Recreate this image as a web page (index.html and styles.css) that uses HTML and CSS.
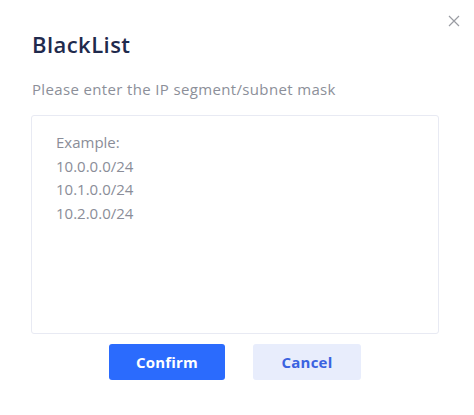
FILE: index.html
```html
<!DOCTYPE html>
<html lang="en">
<head>
<meta charset="utf-8">
<title>BlackList</title>
<link rel="stylesheet" href="styles.css">
</head>
<body>
<div class="dialog">
  <button class="close" aria-label="Close">
    <svg width="12" height="12" viewBox="0 0 12 12"><path d="M1 1L11 11M11 1L1 11" stroke="#9a9ca3" stroke-width="1.2" fill="none"/></svg>
  </button>
  <h1 class="title">BlackList</h1>
  <p class="label">Please enter the IP segment/subnet mask</p>
  <textarea class="input" placeholder="Example:&#10;10.0.0.0/24&#10;10.1.0.0/24&#10;10.2.0.0/24"></textarea>
  <div class="actions">
    <button class="btn btn-primary">Confirm</button>
    <button class="btn btn-secondary">Cancel</button>
  </div>
</div>
</body>
</html>
```
FILE: styles.css
```css
html, body {
  margin: 0;
  padding: 0;
  background: #ffffff;
}
body {
  font-family: "Open Sans", "Noto Sans", sans-serif;
}
.dialog {
  position: relative;
  padding: 30px 35px 0 31px;
}
.close {
  position: absolute;
  top: 15px;
  right: 14px;
  width: 12px;
  height: 12px;
  padding: 0;
  border: 0;
  background: none;
  display: flex;
  cursor: pointer;
}
.title {
  margin: 0 0 0 1px;
  font-size: 22px;
  line-height: 28px;
  font-weight: 600;
  letter-spacing: 0.45px;
  color: #1f2a4d;
}
.label {
  margin: 21px 0 0 1px;
  font-size: 15px;
  line-height: 20px;
  letter-spacing: 0.35px;
  color: #8c8f99;
}
.input {
  display: block;
  box-sizing: border-box;
  width: 408px;
  height: 219px;
  margin-top: 16px;
  padding: 15px 24px;
  border: 1px solid #e8eaf3;
  border-radius: 3px;
  resize: none;
  font-family: inherit;
  font-size: 15px;
  line-height: 23.5px;
  color: #555;
  outline: none;
}
.input::placeholder {
  color: #8a8d98;
  opacity: 1;
}
.actions {
  display: flex;
  justify-content: center;
  gap: 28px;
  margin-top: 10px;
}
.btn {
  height: 36px;
  border: 0;
  border-radius: 3px;
  font-family: inherit;
  font-size: 15px;
  font-weight: 700;
  letter-spacing: 0.2px;
  cursor: pointer;
}
.btn-primary {
  width: 116px;
  background: #2b6bfd;
  color: #ffffff;
}
.btn-secondary {
  width: 108px;
  background: #e8edfc;
  color: #3a63e0;
}
```
